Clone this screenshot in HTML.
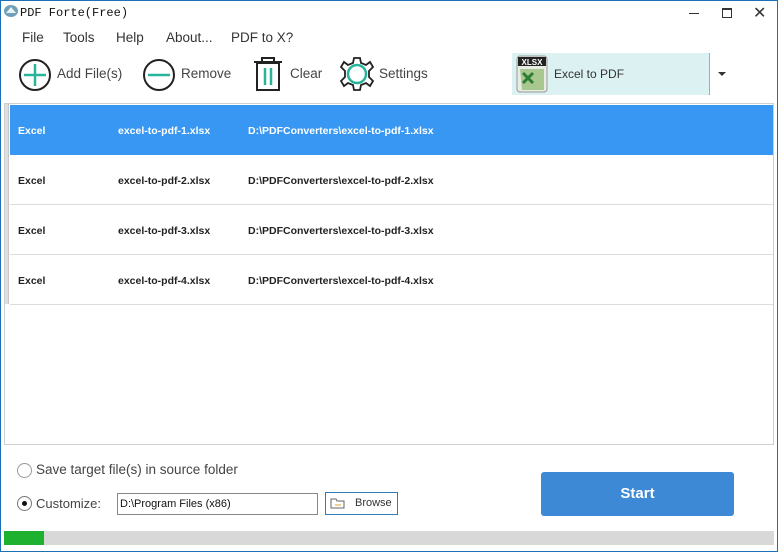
<!DOCTYPE html>
<html><head><meta charset="utf-8"><style>
*{margin:0;padding:0;box-sizing:border-box}
body{width:778px;height:552px;overflow:hidden;background:#fff;font-family:"Liberation Sans","Noto Sans CJK SC",sans-serif;position:relative;color:#222}
.win{position:absolute;left:0;top:0;width:778px;height:552px;border:1px solid #1d6fb8;}
.abs{position:absolute}
.menu span{position:absolute;top:30px;font-size:13.5px;color:#333}
.tb{position:absolute;top:62px;font-size:13.5px;color:#444}
.list{position:absolute;left:4px;top:103px;width:770px;height:342px;border:1px solid #cfcfcf;background:#fff}
.strip{position:absolute;left:0;top:0;width:4px;height:200px;background:#dedede;border-right:1px solid #c8c8c8}
.row{position:absolute;left:5px;width:763px;height:50px;border-bottom:1px solid #dcdcdc;font-size:10.5px;font-weight:bold;color:#222}
.row span{position:absolute;top:20px}
.sel{background:#3797f3;color:#fff;border-bottom:none}
</style></head><body>
<div class="win"></div>
<svg class="abs" style="left:3px;top:4px" width="16" height="14" viewBox="0 0 16 14"><ellipse cx="8" cy="7" rx="7" ry="6" fill="#6fa0b8"/><path d="M3 9 L8 3 L13 9Z" fill="#e8f2f6"/></svg>
<div class="abs" style="left:20px;top:6px;font-family:'Liberation Mono',monospace;font-size:12px;color:#111">PDF Forte(Free)</div>
<div class="abs" style="left:689px;top:13px;width:10px;height:1px;background:#333"></div>
<div class="abs" style="left:722px;top:8px;width:10px;height:10px;border:1px solid #333;border-top-width:2px"></div>
<div class="abs" style="left:753px;top:3px;font-size:16px;color:#333">✕</div>
<div class="menu"><span style="left:22px">File</span><span style="left:63px">Tools</span><span style="left:116px">Help</span><span style="left:166px">About...</span><span style="left:231px">PDF to X?</span></div>
<svg class="abs" style="left:18px;top:58px" width="34" height="34"><circle cx="17" cy="17" r="15" fill="none" stroke="#222" stroke-width="2"/><path d="M17 6V28M6 17H28" stroke="#28b49a" stroke-width="2.5"/></svg>
<div class="tb" style="left:57px;top:66px">Add File(s)</div>
<svg class="abs" style="left:142px;top:58px" width="34" height="34"><circle cx="17" cy="17" r="15" fill="none" stroke="#222" stroke-width="2"/><path d="M6 17H28" stroke="#28b49a" stroke-width="2.5"/></svg>
<div class="tb" style="left:181px;top:66px">Remove</div>
<svg class="abs" style="left:252px;top:56px" width="32" height="36"><path d="M2 6H30M10 6V2H22V6" fill="none" stroke="#222" stroke-width="2"/><rect x="5" y="7" width="22" height="27" fill="none" stroke="#222" stroke-width="2"/><path d="M13 12V29M19 12V29" stroke="#28b49a" stroke-width="2.5"/></svg>
<div class="tb" style="left:290px;top:66px">Clear</div>
<svg class="abs" style="left:339px;top:56px" width="36" height="36" viewBox="0 0 36 36"><path d="M15 2H21L22 7L27 9L31 6L34 11L30 15V21L34 25L31 30L27 27L22 29L21 34H15L14 29L9 27L5 30L2 25L6 21V15L2 11L5 6L9 9L14 7Z" fill="none" stroke="#222" stroke-width="1.8"/><circle cx="18" cy="18" r="9" fill="none" stroke="#28b49a" stroke-width="2.5"/></svg>
<div class="tb" style="left:379px;top:66px">Settings</div>
<div class="abs" style="left:512px;top:53px;width:198px;height:42px;background:#dcf1f2;border-right:1px solid #aaa"></div>
<svg class="abs" style="left:516px;top:55px" width="32" height="38"><rect x="1" y="1" width="30" height="36" rx="3" fill="#e8ece4" stroke="#999"/><rect x="2" y="2" width="28" height="9" fill="#222"/><text x="16" y="10" font-size="8" font-weight="bold" fill="#fff" text-anchor="middle" font-family="Liberation Sans">XLSX</text><path d="M4 14H28V35H6Z" fill="#a8c890"/><path d="M7 18L17 28M17 18L7 28" stroke="#2e7d32" stroke-width="3"/></svg>
<div class="abs" style="left:554px;top:67px;font-size:12px;color:#333">Excel to PDF</div>
<div class="abs" style="left:718px;top:72px;width:0;height:0;border-left:4px solid transparent;border-right:4px solid transparent;border-top:4px solid #333"></div>
<div class="list">
<div class="strip"></div>
<div class="row sel" style="top:1px"><span style="left:8px">Excel</span><span style="left:108px">excel-to-pdf-1.xlsx</span><span style="left:238px">D:\PDFConverters\excel-to-pdf-1.xlsx</span></div>
<div class="row" style="top:51px"><span style="left:8px">Excel</span><span style="left:108px">excel-to-pdf-2.xlsx</span><span style="left:238px">D:\PDFConverters\excel-to-pdf-2.xlsx</span></div>
<div class="row" style="top:101px"><span style="left:8px">Excel</span><span style="left:108px">excel-to-pdf-3.xlsx</span><span style="left:238px">D:\PDFConverters\excel-to-pdf-3.xlsx</span></div>
<div class="row" style="top:151px"><span style="left:8px">Excel</span><span style="left:108px">excel-to-pdf-4.xlsx</span><span style="left:238px">D:\PDFConverters\excel-to-pdf-4.xlsx</span></div>
</div>
<div class="abs" style="left:17px;top:463px;width:15px;height:15px;border:1px solid #999;border-radius:50%"></div>
<div class="abs" style="left:36px;top:462px;font-size:13.5px;color:#444">Save target file(s) in source folder</div>
<div class="abs" style="left:17px;top:496px;width:15px;height:15px;border:1px solid #777;border-radius:50%"></div>
<div class="abs" style="left:22px;top:501px;width:5px;height:5px;background:#111;border-radius:50%"></div>
<div class="abs" style="left:36px;top:496px;font-size:13px;color:#444">Customize:</div>
<div class="abs" style="left:117px;top:493px;width:201px;height:22px;border:1px solid #888;font-size:11px;padding:4px 0 0 2px;color:#111">D:\Program Files (x86)</div>
<div class="abs" style="left:325px;top:492px;width:73px;height:23px;border:1px solid #2e7bb8;font-size:11px;color:#333;padding:4px 0 0 29px">Browse</div>
<svg class="abs" style="left:330px;top:496px" width="16" height="14"><path d="M1 3H6L7 5H14V12H1Z" fill="#fff" stroke="#666"/><path d="M5 9H11" stroke="#e0a020"/></svg>
<div class="abs" style="left:541px;top:472px;width:193px;height:44px;background:#3d89d6;border-radius:3px;color:#fff;font-weight:bold;font-size:15px;text-align:center;line-height:44px">Start</div>
<div class="abs" style="left:4px;top:531px;width:770px;height:14px;background:#d8d8d8"></div>
<div class="abs" style="left:4px;top:531px;width:40px;height:14px;background:#1db12f"></div>
</body></html>
